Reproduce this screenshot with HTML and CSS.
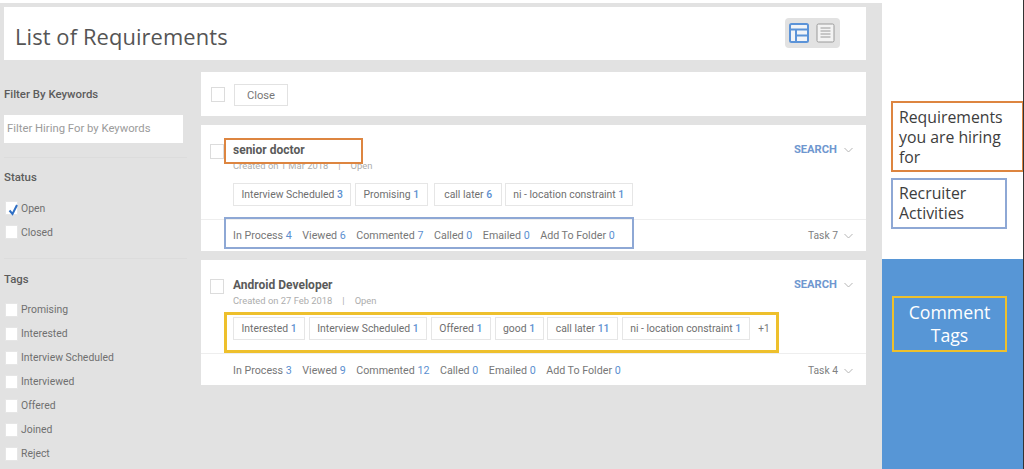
FILE: index.html
```html
<!DOCTYPE html>
<html lang="en">
<head>
<meta charset="utf-8">
<title>List of Requirements</title>
<link rel="stylesheet" href="styles.css">
</head>
<body>
<div class="page">
  <main class="app">
    <header class="head">
      <h1>List of Requirements</h1>
      <div class="views">
        <svg width="20" height="20" viewBox="0 0 20 20" fill="#f1f4f8" stroke="#5b93d8" stroke-width="2"><rect x="1" y="1" width="18" height="18" rx="1.5"/><path d="M1 6.5h18M7 6.5v12.5M7 12.5h12"/></svg>
        <svg width="19" height="20" viewBox="0 0 19 20" fill="#f3f3f3" stroke="#9a9a9a"><rect x="1" y="1" width="17" height="18" rx="1.5"/><path d="M4.5 5h10M4.5 8h10M4.5 11h10M4.5 14h10"/></svg>
      </div>
    </header>
    <div class="cols">
      <aside class="side">
        <section class="group g-key">
          <h2>Filter By Keywords</h2>
          <div class="input">Filter Hiring For by Keywords</div>
        </section>
        <section class="group g-status">
          <h2>Status</h2>
          <ul class="checks">
            <li><span class="cb"><svg class="tick" width="13" height="13" viewBox="0 0 13 13" fill="none" stroke="#2f6fc4" stroke-width="2"><path d="M2.5 7.5l3 3.5L10 2"/></svg></span>Open</li>
            <li><span class="cb"></span>Closed</li>
          </ul>
        </section>
        <section class="group g-tags">
          <h2>Tags</h2>
          <ul class="checks">
            <li><span class="cb"></span>Promising</li>
            <li><span class="cb"></span>Interested</li>
            <li><span class="cb"></span>Interview Scheduled</li>
            <li><span class="cb"></span>Interviewed</li>
            <li><span class="cb"></span>Offered</li>
            <li><span class="cb"></span>Joined</li>
            <li><span class="cb"></span>Reject</li>
          </ul>
        </section>
      </aside>
      <div class="list">
        <div class="card bar">
          <span class="box"></span>
          <span class="btn">Close</span>
        </div>
        <article class="card job">
          <div class="job-top">
            <span class="box"></span>
            <div class="job-title">
              <h3>senior doctor</h3>
              <p class="meta"><span>Created on 1 Mar 2018</span><span class="sep">|</span><span>Open</span></p>
            </div>
            <a class="search">SEARCH<svg class="chev" width="9" height="6" viewBox="0 0 9 6" fill="none" stroke="#b5b5b5"><path d="M.5 1l4 4 4-4"/></svg></a>
          </div>
          <div class="tags">
            <span class="tag">Interview Scheduled <b>3</b></span>
            <span class="tag">Promising <b>1</b></span>
            <span class="tag tag-apart">call later <b>6</b></span>
            <span class="tag">ni - location constraint <b>1</b></span>
          </div>
          <div class="foot">
            <span>In Process <b>4</b></span>
            <span>Viewed <b>6</b></span>
            <span>Commented <b>7</b></span>
            <span>Called <b>0</b></span>
            <span>Emailed <b>0</b></span>
            <span>Add To Folder <b>0</b></span>
            <span class="task">Task 7<svg class="chev" width="9" height="6" viewBox="0 0 9 6" fill="none" stroke="#b5b5b5"><path d="M.5 1l4 4 4-4"/></svg></span>
          </div>
          <div class="mark mark-orange"></div>
          <div class="mark mark-blue"></div>
        </article>
        <article class="card job">
          <div class="job-top">
            <span class="box"></span>
            <div class="job-title">
              <h3>Android Developer</h3>
              <p class="meta"><span>Created on 27 Feb 2018</span><span class="sep">|</span><span>Open</span></p>
            </div>
            <a class="search">SEARCH<svg class="chev" width="9" height="6" viewBox="0 0 9 6" fill="none" stroke="#b5b5b5"><path d="M.5 1l4 4 4-4"/></svg></a>
          </div>
          <div class="tags">
            <span class="tag">Interested <b>1</b></span>
            <span class="tag">Interview Scheduled <b>1</b></span>
            <span class="tag">Offered <b>1</b></span>
            <span class="tag">good <b>1</b></span>
            <span class="tag">call later <b>11</b></span>
            <span class="tag">ni - location constraint <b>1</b></span>
            <span class="more">+1</span>
          </div>
          <div class="foot">
            <span>In Process <b>3</b></span>
            <span>Viewed <b>9</b></span>
            <span>Commented <b>12</b></span>
            <span>Called <b>0</b></span>
            <span>Emailed <b>0</b></span>
            <span>Add To Folder <b>0</b></span>
            <span class="task">Task 4<svg class="chev" width="9" height="6" viewBox="0 0 9 6" fill="none" stroke="#b5b5b5"><path d="M.5 1l4 4 4-4"/></svg></span>
          </div>
          <div class="mark mark-yellow"></div>
        </article>
      </div>
    </div>
  </main>
  <aside class="legend">
    <div class="legend-top">
      <div class="note note-orange">Requirements you are hiring for</div>
      <div class="note note-blue">Recruiter Activities</div>
    </div>
    <div class="legend-bottom">
      <div class="note note-yellow">Comment Tags</div>
    </div>
  </aside>
</div>
</body>
</html>
```
FILE: styles.css
```css
* { box-sizing: border-box; }
html, body { margin: 0; padding: 0; height: 469px; overflow: hidden; background: #fff; }
body { font-family: Roboto, "Liberation Sans", sans-serif; color: #666; }
h1, h2, h3, p, ul { margin: 0; padding: 0; font-weight: normal; }
ul { list-style: none; }

.page { display: flex; width: 1024px; height: 469px; }

.app { width: 882px; margin-top: 3px; background: #e2e2e2; padding: 4px 16px 0 4px; overflow: hidden; flex: none; }

.head { height: 53px; background: #fff; display: flex; align-items: center; justify-content: space-between; padding: 6px 26px 0 11px; }
.head h1 { font-family: "Open Sans", sans-serif; font-size: 21.9px; color: #555; letter-spacing: .1px; }
.views { width: 55px; height: 30px; margin-top: -7px; background: #e2e2e2; border-radius: 4px; display: flex; align-items: center; gap: 7px; padding-left: 4px; }

.cols { display: flex; }

.side { width: 197px; flex: none; font-size: 11px; }
.side h2 { font-size: 11.4px; font-weight: 500; color: #5c5c5c; line-height: 14px; }
.group { margin-right: 14px; }
.g-key { padding-top: 27px; padding-bottom: 14px; border-bottom: 1px solid #dcdcdc; }
.g-key h2 { margin-bottom: 14px; }
.input { width: 179px; height: 28px; background: #fff; color: #9b9b9b; line-height: 27px; padding-left: 3px; font-size: 11.3px; }
.g-status { padding-top: 12px; padding-bottom: 14px; border-bottom: 1px solid #dcdcdc; }
.g-status h2 { margin-bottom: 12px; }
.g-tags { padding-top: 13px; }
.g-tags h2 { margin-bottom: 11.5px; }
.checks li { display: flex; align-items: center; height: 24px; color: #707070; font-size: 10.4px; }
.cb { width: 13px; height: 14px; background: #fff; border: 1px solid #e6e6e6; margin-right: 3px; position: relative; flex: none; margin-left: 1px; }
.tick { position: absolute; left: 1px; top: 1px; }

.list { width: 665px; flex: none; }
.card { background: #fff; }
.bar { margin-top: 12px; height: 44px; display: flex; align-items: center; padding: 1px 0 0 10px; gap: 9px; }
.box { width: 14px; height: 15px; border: 1px solid #dcdcdc; background: #fff; flex: none; }
.btn { width: 54px; height: 22px; border: 1px solid #e2e2e2; text-align: center; line-height: 21px; font-size: 11.2px; color: #777; }

.job { position: relative; margin-top: 9px; height: 126px; }
.job + .job { height: 125px; }
.job-top { display: flex; align-items: flex-start; padding: 18px 13px 0 9px; height: 50px; }
.job + .job .job-top { height: 49px; }
.job-top .box { margin-top: 1px; }
.job-title { margin-left: 9px; flex: 1; }
.job h3 { font-size: 12px; font-weight: 700; color: #5a5a5a; line-height: 14px; }
.meta { font-size: 9.4px; color: #adadad; line-height: 11px; margin-top: 3px; display: flex; }
.sep { margin: 0 10px; }
.search { font-size: 11.2px; font-weight: 700; color: #6f97cf; display: flex; align-items: center; gap: 7px; line-height: 14px; }
.chev { flex: none; }

.tags { display: flex; gap: 3.7px; padding-left: 32px; height: 24px; margin-top: 7px; align-items: center; }
.tag { height: 23px; padding: 0 7.5px; border: 1px solid #e6e6e6; line-height: 21px; font-size: 10.4px; color: #6f6f6f; white-space: nowrap; }
.tag-apart { margin: 0 -1px 0 3px; padding: 0 9px; }
.tag b, .foot b { font-weight: 400; color: #5c8fd0; }
.tag b { font-weight: 500; }
.more { font-size: 10px; color: #777; margin-left: 5px; }

.foot { position: absolute; left: 0; right: 0; bottom: 0; height: 32px; border-top: 1px solid #eeeeee; display: flex; align-items: center; gap: 10.5px; padding: 0 13px 0 32px; font-size: 10.7px; color: #777; white-space: nowrap; }
.job + .job .foot { padding-top: 2px; }
.task { margin-left: auto; display: flex; align-items: center; gap: 6px; color: #808080; font-size: 10.3px; }

.mark { position: absolute; pointer-events: none; border-style: solid; }
.mark-orange { left: 23px; top: 13px; width: 139px; height: 26px; border-width: 2px; border-color: #dd8540; }
.mark-blue { left: 23px; top: 92px; width: 410px; height: 32px; border-width: 2px; border-color: #8ea8d5; }
.mark-yellow { left: 23px; top: 52px; width: 555px; height: 41px; border-width: 3px; border-color: #eec02c; }

.legend { width: 142px; flex: none; display: flex; flex-direction: column; border-right: 1px solid #333; font-family: "Open Sans", sans-serif; }
.legend-top { height: 259px; background: #fff; padding-top: 101px; padding-left: 9px; display: flex; flex-direction: column; align-items: flex-start; }
.legend-bottom { flex: 1; background: #5796d6; padding: 37px 0 0 10px; }
.note { color: #3d3d3d; font-size: 15.8px; line-height: 20px; border: 2px solid; padding: 0 6px; }
.note-orange { width: 132px; height: 71px; padding-top: 4px; border-color: #dd8540; border-right-width: 1px; margin-right: -1px; }
.note-blue { width: 116px; height: 51px; margin-top: 6px; padding-top: 3px; border-color: #8ea8d5; }
.note-yellow { width: 115px; height: 56px; border-color: #eec02c; color: #fff; font-size: 17.7px; line-height: 23px; text-align: center; padding: 3px 0 0; }
```
